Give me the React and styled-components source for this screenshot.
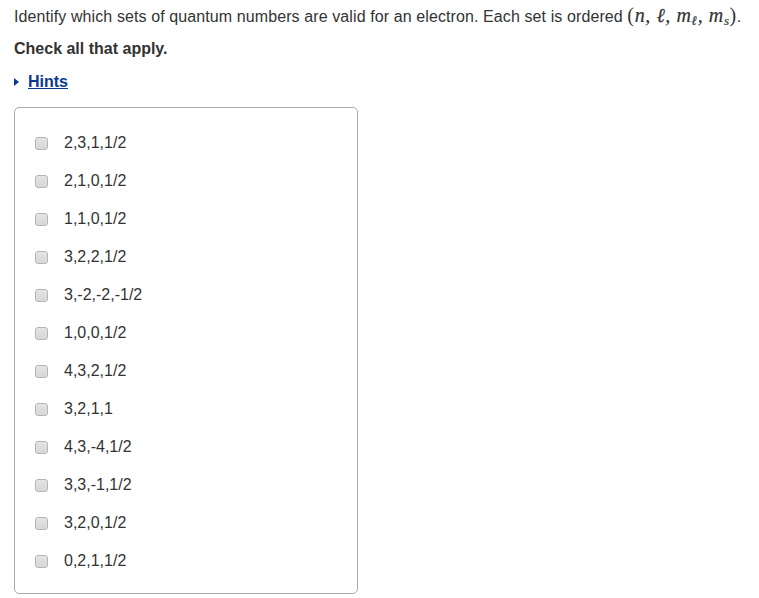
import React from 'react';
import styled, { createGlobalStyle } from 'styled-components';

const GlobalStyle = createGlobalStyle`
  body {
    margin: 0;
    background: #fff;
    font-family: Arial, "Liberation Sans", sans-serif;
    color: #333;
  }
`;

const Page = styled.div`
  padding: 4px 14px 0 14px;
  width: 759px;
  box-sizing: border-box;
`;

const Prompt = styled.p`
  margin: 0;
  font-size: 16px;
  line-height: 22px;
  letter-spacing: 0.1px;
  color: #333;
  white-space: nowrap;
`;

const Math = styled.span`
  font-family: "Liberation Serif", "DejaVu Serif", serif;
  font-style: italic;
  font-size: 20px;
  letter-spacing: 0.6px;
  -webkit-text-stroke: 0.2px #333;
  sub {
    font-size: 13px;
    vertical-align: -3px;
  }
`;

const Upright = styled.span`
  font-style: normal;
  -webkit-text-stroke: 0;
`;

const Instruction = styled.p`
  margin: 7px 0 0 0;
  font-size: 16px;
  font-weight: bold;
  line-height: 20px;
`;

const HintsToggle = styled.a`
  display: inline-flex;
  align-items: center;
  gap: 9px;
  margin-top: 14px;
  font-size: 16px;
  font-weight: bold;
  color: #0b3a8c;
  cursor: pointer;

  span {
    text-decoration: underline;
  }
`;

const Caret = styled.i`
  width: 0;
  height: 0;
  border-top: 4px solid transparent;
  border-bottom: 4px solid transparent;
  border-left: 5px solid #0b3a8c;
`;

const OptionBox = styled.div`
  margin-top: 16px;
  width: 344px;
  box-sizing: border-box;
  border: 1px solid #aaa;
  border-radius: 5px;
  padding: 16px 0 13px 20px;
`;

const Option = styled.label`
  display: flex;
  align-items: center;
  height: 38px;
  gap: 16px;
  font-size: 16px;
  color: #333;
`;

const Box = styled.span`
  width: 13px;
  height: 13px;
  box-sizing: border-box;
  border: 1px solid #b3b3b3;
  border-radius: 3px;
  background: linear-gradient(#e4e4e4, #d6d6d6);
  box-shadow: inset 0 0 1px #fff;
`;

const sets = [
  '2,3,1,1/2',
  '2,1,0,1/2',
  '1,1,0,1/2',
  '3,2,2,1/2',
  '3,-2,-2,-1/2',
  '1,0,0,1/2',
  '4,3,2,1/2',
  '3,2,1,1',
  '4,3,-4,1/2',
  '3,3,-1,1/2',
  '3,2,0,1/2',
  '0,2,1,1/2',
];

export default function App() {
  return (
    <Page>
      <GlobalStyle />
      <Prompt>
        Identify which sets of quantum numbers are valid for an electron. Each set is ordered{' '}
        <Math>
          <Upright>(</Upright>n, ℓ, m<sub>ℓ</sub>, m<sub>s</sub>
          <Upright>)</Upright>
        </Math>
        .
      </Prompt>
      <Instruction>Check all that apply.</Instruction>
      <HintsToggle>
        <Caret />
        <span>Hints</span>
      </HintsToggle>
      <OptionBox>
        {sets.map((s, i) => (
          <Option key={i}>
            <Box />
            {s}
          </Option>
        ))}
      </OptionBox>
    </Page>
  );
}
